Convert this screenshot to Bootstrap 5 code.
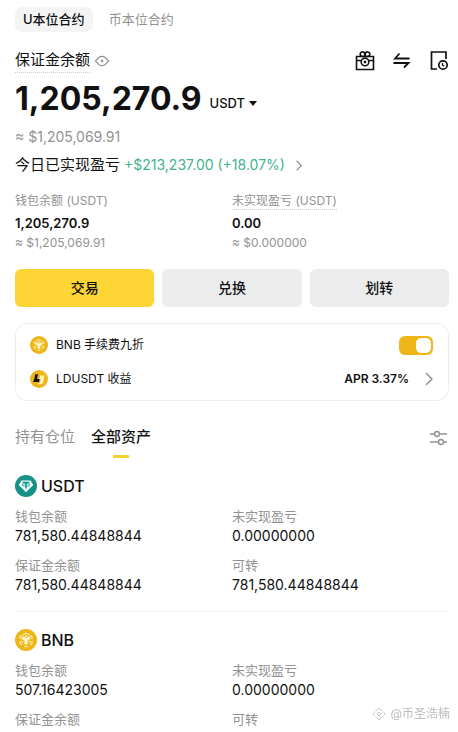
<!DOCTYPE html>
<html lang="zh-CN">
<head>
<meta charset="utf-8">
<meta name="viewport" content="width=device-width, initial-scale=1">
<title>U本位合约</title>
<link rel="stylesheet" href="https://cdn.jsdelivr.net/npm/bootstrap@5.3.0/dist/css/bootstrap.min.css">
<style>
body{font-family:Inter,"Noto Sans CJK SC",sans-serif;font-size:13px;line-height:20px;color:#111;background:#fff}
button{color:inherit}
.page{padding:7px 9px 0 15px}
.muted{color:#929292}
.chip{font-size:13px;line-height:25px;padding:0 8px;border:0;border-radius:7px;background:transparent;color:#929292}
.chip.on{background:#f4f4f4;color:#111;font-weight:500}
.line{font-size:15px;line-height:24px}
.dotted{border-bottom:1px dotted #ccc}
.total{font-size:32px;line-height:44px;font-weight:700}
.unit{font-size:13px;font-weight:500}
.t14{font-size:14px}
.gain{color:#3fb391;font-size:14px}
.sum-label{font-size:12px;height:20px;line-height:16px}
.sum-label span{display:inline-block}
.sum-value{font-size:13px;line-height:20px;font-weight:600}
.sum-approx{font-size:12px;line-height:20px}
.act{flex:1 1 0;height:38px;padding:0;border:0;border-radius:6px;background:#ececec;font-size:14px;font-weight:500}
.act.main{background:#fdd535}
.perks{border:1px solid #ededed;border-radius:12px;padding:4px 15px 4px 14px}
.perk{height:34px;font-size:12px}
.bare{border:0;background:none;padding:0;display:flex;align-items:center}
.switch{appearance:none;width:34px;height:19px;margin:0;border-radius:6px;background:#edb516;display:flex;justify-content:flex-end;padding:2px}
.switch::before{content:"";width:15px;height:15px;border-radius:5px;background:#fff}
.switch:not(:checked){background:#ccc;justify-content:flex-start}
.tab{border:0;background:none;padding:0;font-size:15px;line-height:24px;height:33px;display:flex;flex-direction:column;align-items:center;justify-content:space-between;color:#929292}
.tab.on{color:#111;font-weight:500}
.tab.on::after{content:"";width:16px;height:3px;border-radius:1px;background:#f2d02f}
.asset+.asset{border-top:1px solid #f2f2f2;margin-top:16px}
.asset{padding-top:16px}
.asset h2{font-size:16px;line-height:24px;font-weight:500;margin:0}
.amount{font-size:14px}
dl,dd,dt{margin:0;font-weight:400}
.pair{row-gap:9px}
.pair>div{padding:0}
.credit{right:8px;bottom:8px;font-size:12px;color:#bdbdbd;position:fixed}
</style>
</head>
<body>
<svg width="0" height="0" class="position-absolute" aria-hidden="true">
<symbol id="bnb" viewBox="0 0 20 20"><circle cx="10" cy="10" r="10" fill="#edb516"/><g fill="none" stroke="#fff3c4" stroke-width="1"><path d="M7 5.400 10 3.700l3 1.700M4.600 9V6.800L6.200 6M15.400 9V6.800L13.800 6M4.600 11v2.300l2 1.100M15.400 11v2.300l-2 1.100M8.300 15.400l1.700.9 1.700-.9"/></g><path d="m10 5.600 1.500.9L10 7.400l-1.500-.9zM6 7.400l1.400-.8L10 8.200l2.600-1.600 1.400.8v1.700l-2.500 1.500v3.100L10 14.600l-1.500-.9v-3.100L6 9.100zM6 10.400l1.400.8v1.700L6 12.100zM14 10.400l-1.400.8v1.700l1.400-.8z" fill="#fff3c4"/></symbol>
<symbol id="chev" viewBox="0 0 8 14"><path d="m1 1 6 6-6 6" fill="none" stroke="#929292" stroke-width="1.500"/></symbol>
</svg>
<main class="page">
<nav class="d-flex gap-2">
<button class="chip on">U本位合约</button><button class="chip">币本位合约</button>
</nav>
<div class="d-flex align-items-center justify-content-between mt-3">
<div class="d-flex align-items-center">
<span class="line dotted">保证金余额</span>
<button class="bare ms-1" aria-label="显示余额"><svg width="16" height="12" viewBox="0 0 16 12" fill="none" stroke="#929292" stroke-width="1.200"><path d="M1.500 6 5 2.300Q8 .3 11 2.300L14.500 6 11 9.700Q8 11.700 5 9.700Z"/><circle cx="8" cy="6" r="1.300" fill="#929292" stroke="none"/></svg></button>
</div>
<div class="d-flex align-items-center gap-3">
<button class="bare" aria-label="奖励"><svg width="22" height="22" viewBox="0 0 22 22" fill="none" stroke="#111" stroke-width="1.600"><path d="M1.500 6.500h17v13h-17zM1.500 10.500h4.700M13.800 10.500h4.700"/><path d="M9.700 6.500H7.500a2.300 2.300 0 1 1 2.200-3zM10.300 6.500h2.200a2.300 2.300 0 1 0-2.200-3z"/><circle cx="10" cy="12" r="3.800" fill="#fff"/><path d="m10 10.300 1.700 1.700-1.700 1.700L8.300 12Z" fill="#111" stroke="none"/></svg></button>
<button class="bare" aria-label="切换"><svg width="20" height="20" viewBox="0 0 20 20" fill="none" stroke="#111" stroke-width="1.800"><path d="M16.500 7.500H2l4.500-5M.5 12h15L11 16.500"/></svg></button>
<button class="bare" aria-label="历史记录"><svg width="20" height="22" viewBox="0 0 20 22" fill="none" stroke="#111" stroke-width="1.700"><path d="M17 9V2H2.500v17H8"/><circle cx="14" cy="15" r="4.200"/><path d="M13.500 13v2.200l1.800 1" stroke-width="1.300"/></svg></button>
</div>
</div>
<div class="d-flex align-items-center gap-2 mt-1">
<span class="total">1,205,270.9</span>
<button class="bare unit gap-1 pt-2">USDT<svg width="8" height="5" viewBox="0 0 8 5"><path d="M0 0h8L4 5z" fill="#111"/></svg></button>
</div>
<div class="line t14 muted mt-1">≈ $1,205,069.91</div>
<a href="#" class="d-flex align-items-center mt-1 line text-reset text-decoration-none">今日已实现盈亏<span class="gain ms-1">+$213,237.00 (+18.07%)</span><svg class="ms-2" width="12" height="11"><use href="#chev"/></svg></a>
<div class="row g-0 pt-3">
<div class="col-6"><div class="sum-label muted"><span>钱包余额 (USDT)</span></div><div class="sum-value">1,205,270.9</div><div class="sum-approx muted">≈ $1,205,069.91</div></div>
<div class="col-6"><div class="sum-label muted"><span class="dotted">未实现盈亏 (USDT)</span></div><div class="sum-value">0.00</div><div class="sum-approx muted">≈ $0.000000</div></div>
</div>
<div class="d-flex gap-2 pt-3">
<button class="act main">交易</button><button class="act">兑换</button><button class="act">划转</button>
</div>
<section class="perks mt-3">
<div class="perk d-flex align-items-center"><svg class="me-2" width="18" height="18"><use href="#bnb"/></svg><label for="fee" class="flex-grow-1">BNB 手续费九折</label><input id="fee" class="switch" type="checkbox" checked></div>
<a href="#" class="perk d-flex align-items-center text-reset text-decoration-none"><svg class="me-2" width="18" height="18" viewBox="0 0 18 18"><circle cx="9" cy="9" r="9" fill="#edb516"/><path d="m5 4.500 3-.5-1 5h2.500L9 12H3l1.500-3.500Z" fill="#111"/><path d="M10 5.500h4.500L13 13l-3 1.500H8l.5-1.500h1.500l.7-4H9.500Z" fill="#fff3c4"/></svg><span class="flex-grow-1">LDUSDT 收益</span><span class="fw-semibold">APR 3.37%</span><svg class="ms-3" width="8" height="14"><use href="#chev"/></svg></a>
</section>
<nav class="d-flex gap-3 pt-4">
<button class="tab">持有仓位</button><button class="tab on">全部资产</button>
<button class="bare ms-auto align-self-start pt-1" aria-label="筛选"><svg width="20" height="18" viewBox="0 0 20 18" fill="none" stroke="#929292" stroke-width="1.400"><path d="M1 5h4.500M10.500 5H18M1 13h8.500M14.500 13H18"/><circle cx="8" cy="5" r="2.500"/><circle cx="12" cy="13" r="2.500"/></svg></button>
</nav>
<section class="asset">
<div class="d-flex align-items-center"><svg class="me-1" width="22" height="22" viewBox="0 0 22 22"><circle cx="11" cy="11" r="11" fill="#17908a"/><path d="M6.500 5.500h9l2.800 4.500-7.300 7.200L3.700 10Z" fill="#e9fff9"/><path d="M7.500 7.500h7M11 7.500v6" stroke="#17908a" stroke-width="1.500"/><ellipse cx="11" cy="10" rx="4" ry="1.200" fill="none" stroke="#17908a" stroke-width=".7"/></svg><h2>USDT</h2></div>
<dl class="row g-0 pair pt-2">
<div class="col-6"><dt class="muted">钱包余额</dt><dd class="amount">781,580.44848844</dd></div>
<div class="col-6"><dt class="muted">未实现盈亏</dt><dd class="amount">0.00000000</dd></div>
<div class="col-6"><dt class="muted">保证金余额</dt><dd class="amount">781,580.44848844</dd></div>
<div class="col-6"><dt class="muted">可转</dt><dd class="amount">781,580.44848844</dd></div>
</dl>
</section>
<section class="asset">
<div class="d-flex align-items-center"><svg class="me-1" width="22" height="22"><use href="#bnb"/></svg><h2>BNB</h2></div>
<dl class="row g-0 pair pt-2">
<div class="col-6"><dt class="muted">钱包余额</dt><dd class="amount">507.16423005</dd></div>
<div class="col-6"><dt class="muted">未实现盈亏</dt><dd class="amount">0.00000000</dd></div>
<div class="col-6"><dt class="muted">保证金余额</dt></div>
<div class="col-6"><dt class="muted">可转</dt></div>
</dl>
</section>
</main>
<div class="credit d-flex align-items-center"><svg class="me-1" width="14" height="14" viewBox="0 0 14 14" fill="none" stroke="#c4c4c4"><path d="M3.500 4.500 7 1l3.500 3.500M3.500 9.500 7 13l3.500-3.500M2.500 5.500 1 7l1.500 1.500M11.500 5.500 13 7l-1.500 1.500M7 5 5 7l2 2 2-2Z"/></svg>@币圣浩楠</div>
<script src="https://cdn.jsdelivr.net/npm/bootstrap@5.3.0/dist/js/bootstrap.bundle.min.js"></script>
</body>
</html>
